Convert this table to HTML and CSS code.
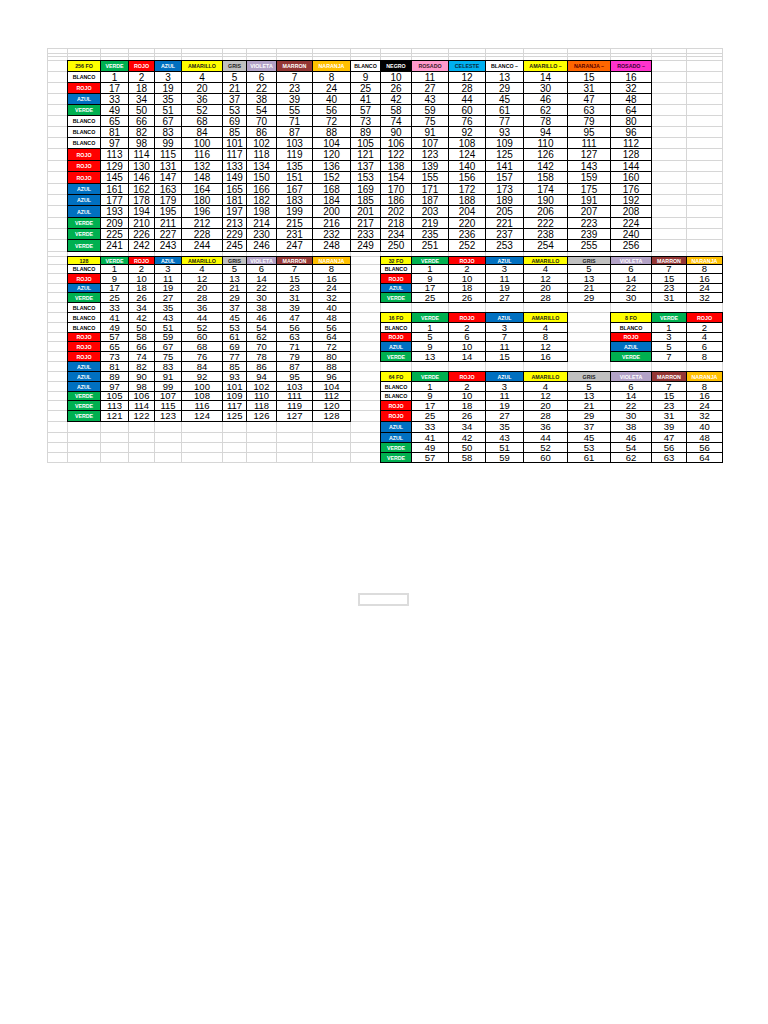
FILE: index.html
```html
<!DOCTYPE html>
<html lang="es">
<head>
<meta charset="utf-8">
<title>Código de colores FO</title>
<link rel="stylesheet" href="styles.css">
</head>
<body>
<div class="sheet">
<table class="grid">
<colgroup><col><col><col><col><col><col><col><col><col><col><col><col><col><col><col><col><col><col><col><col></colgroup>
<tbody class="top">
<tr class="h5"><td></td><td></td><td></td><td></td><td></td><td></td><td></td><td></td><td></td><td></td><td></td><td></td><td></td><td></td><td></td><td></td><td></td><td></td><td></td><td></td></tr>
<tr class="h3"><td></td><td></td><td></td><td></td><td></td><td></td><td></td><td></td><td></td><td></td><td></td><td></td><td></td><td></td><td></td><td></td><td></td><td></td><td></td><td></td></tr>
<tr class="h4"><td></td><td></td><td></td><td></td><td></td><td></td><td></td><td></td><td></td><td></td><td></td><td></td><td></td><td></td><td></td><td></td><td></td><td></td><td></td><td></td></tr>
<tr class="h11"><td></td><td class="ye">256 FO</td><td class="ve">VERDE</td><td class="ro">ROJO</td><td class="az">AZUL</td><td class="ye">AMARILLO</td><td class="gr">GRIS</td><td class="vi">VIOLETA</td><td class="ma">MARRON</td><td class="na">NARANJA</td><td class="bl">BLANCO</td><td class="ne">NEGRO</td><td class="rs">ROSADO</td><td class="ce">CELESTE</td><td class="bl">BLANCO –</td><td class="ye">AMARILLO –</td><td class="nb">NARANJA –</td><td class="rm">ROSADO –</td><td></td><td></td></tr>
<tr class="h11"><td></td><td class="bl">BLANCO</td><td class="n">1</td><td class="n">2</td><td class="n">3</td><td class="n">4</td><td class="n">5</td><td class="n">6</td><td class="n">7</td><td class="n">8</td><td class="n">9</td><td class="n">10</td><td class="n">11</td><td class="n">12</td><td class="n">13</td><td class="n">14</td><td class="n">15</td><td class="n">16</td><td></td><td></td></tr>
<tr class="h11"><td></td><td class="ro">ROJO</td><td class="n">17</td><td class="n">18</td><td class="n">19</td><td class="n">20</td><td class="n">21</td><td class="n">22</td><td class="n">23</td><td class="n">24</td><td class="n">25</td><td class="n">26</td><td class="n">27</td><td class="n">28</td><td class="n">29</td><td class="n">30</td><td class="n">31</td><td class="n">32</td><td></td><td></td></tr>
<tr class="h11"><td></td><td class="az">AZUL</td><td class="n">33</td><td class="n">34</td><td class="n">35</td><td class="n">36</td><td class="n">37</td><td class="n">38</td><td class="n">39</td><td class="n">40</td><td class="n">41</td><td class="n">42</td><td class="n">43</td><td class="n">44</td><td class="n">45</td><td class="n">46</td><td class="n">47</td><td class="n">48</td><td></td><td></td></tr>
<tr class="h11"><td></td><td class="ve">VERDE</td><td class="n">49</td><td class="n">50</td><td class="n">51</td><td class="n">52</td><td class="n">53</td><td class="n">54</td><td class="n">55</td><td class="n">56</td><td class="n">57</td><td class="n">58</td><td class="n">59</td><td class="n">60</td><td class="n">61</td><td class="n">62</td><td class="n">63</td><td class="n">64</td><td></td><td></td></tr>
<tr class="h11"><td></td><td class="bl">BLANCO</td><td class="n">65</td><td class="n">66</td><td class="n">67</td><td class="n">68</td><td class="n">69</td><td class="n">70</td><td class="n">71</td><td class="n">72</td><td class="n">73</td><td class="n">74</td><td class="n">75</td><td class="n">76</td><td class="n">77</td><td class="n">78</td><td class="n">79</td><td class="n">80</td><td></td><td></td></tr>
<tr class="h11"><td></td><td class="bl">BLANCO</td><td class="n">81</td><td class="n">82</td><td class="n">83</td><td class="n">84</td><td class="n">85</td><td class="n">86</td><td class="n">87</td><td class="n">88</td><td class="n">89</td><td class="n">90</td><td class="n">91</td><td class="n">92</td><td class="n">93</td><td class="n">94</td><td class="n">95</td><td class="n">96</td><td></td><td></td></tr>
<tr class="h11"><td></td><td class="bl">BLANCO</td><td class="n">97</td><td class="n">98</td><td class="n">99</td><td class="n">100</td><td class="n">101</td><td class="n">102</td><td class="n">103</td><td class="n">104</td><td class="n">105</td><td class="n">106</td><td class="n">107</td><td class="n">108</td><td class="n">109</td><td class="n">110</td><td class="n">111</td><td class="n">112</td><td></td><td></td></tr>
<tr class="h12"><td></td><td class="ro">ROJO</td><td class="n">113</td><td class="n">114</td><td class="n">115</td><td class="n">116</td><td class="n">117</td><td class="n">118</td><td class="n">119</td><td class="n">120</td><td class="n">121</td><td class="n">122</td><td class="n">123</td><td class="n">124</td><td class="n">125</td><td class="n">126</td><td class="n">127</td><td class="n">128</td><td></td><td></td></tr>
<tr class="h11"><td></td><td class="ro">ROJO</td><td class="n">129</td><td class="n">130</td><td class="n">131</td><td class="n">132</td><td class="n">133</td><td class="n">134</td><td class="n">135</td><td class="n">136</td><td class="n">137</td><td class="n">138</td><td class="n">139</td><td class="n">140</td><td class="n">141</td><td class="n">142</td><td class="n">143</td><td class="n">144</td><td></td><td></td></tr>
<tr class="h12"><td></td><td class="ro">ROJO</td><td class="n">145</td><td class="n">146</td><td class="n">147</td><td class="n">148</td><td class="n">149</td><td class="n">150</td><td class="n">151</td><td class="n">152</td><td class="n">153</td><td class="n">154</td><td class="n">155</td><td class="n">156</td><td class="n">157</td><td class="n">158</td><td class="n">159</td><td class="n">160</td><td></td><td></td></tr>
<tr class="h11"><td></td><td class="az">AZUL</td><td class="n">161</td><td class="n">162</td><td class="n">163</td><td class="n">164</td><td class="n">165</td><td class="n">166</td><td class="n">167</td><td class="n">168</td><td class="n">169</td><td class="n">170</td><td class="n">171</td><td class="n">172</td><td class="n">173</td><td class="n">174</td><td class="n">175</td><td class="n">176</td><td></td><td></td></tr>
<tr class="h11"><td></td><td class="az">AZUL</td><td class="n">177</td><td class="n">178</td><td class="n">179</td><td class="n">180</td><td class="n">181</td><td class="n">182</td><td class="n">183</td><td class="n">184</td><td class="n">185</td><td class="n">186</td><td class="n">187</td><td class="n">188</td><td class="n">189</td><td class="n">190</td><td class="n">191</td><td class="n">192</td><td></td><td></td></tr>
<tr class="h12"><td></td><td class="az">AZUL</td><td class="n">193</td><td class="n">194</td><td class="n">195</td><td class="n">196</td><td class="n">197</td><td class="n">198</td><td class="n">199</td><td class="n">200</td><td class="n">201</td><td class="n">202</td><td class="n">203</td><td class="n">204</td><td class="n">205</td><td class="n">206</td><td class="n">207</td><td class="n">208</td><td></td><td></td></tr>
<tr class="h11"><td></td><td class="ve">VERDE</td><td class="n">209</td><td class="n">210</td><td class="n">211</td><td class="n">212</td><td class="n">213</td><td class="n">214</td><td class="n">215</td><td class="n">216</td><td class="n">217</td><td class="n">218</td><td class="n">219</td><td class="n">220</td><td class="n">221</td><td class="n">222</td><td class="n">223</td><td class="n">224</td><td></td><td></td></tr>
<tr class="h11"><td></td><td class="ve">VERDE</td><td class="n">225</td><td class="n">226</td><td class="n">227</td><td class="n">228</td><td class="n">229</td><td class="n">230</td><td class="n">231</td><td class="n">232</td><td class="n">233</td><td class="n">234</td><td class="n">235</td><td class="n">236</td><td class="n">237</td><td class="n">238</td><td class="n">239</td><td class="n">240</td><td></td><td></td></tr>
<tr class="h12"><td></td><td class="ve">VERDE</td><td class="n">241</td><td class="n">242</td><td class="n">243</td><td class="n">244</td><td class="n">245</td><td class="n">246</td><td class="n">247</td><td class="n">248</td><td class="n">249</td><td class="n">250</td><td class="n">251</td><td class="n">252</td><td class="n">253</td><td class="n">254</td><td class="n">255</td><td class="n">256</td><td></td><td></td></tr>
<tr class="h5"><td></td><td></td><td></td><td></td><td></td><td></td><td></td><td></td><td></td><td></td><td></td><td></td><td></td><td></td><td></td><td></td><td></td><td></td><td></td><td></td></tr>
</tbody>
<tbody class="low">
<tr class="h8"><td></td><td class="ye">128</td><td class="ve">VERDE</td><td class="ro">ROJO</td><td class="az">AZUL</td><td class="ye">AMARILLO</td><td class="gr">GRIS</td><td class="vi">VIOLETA</td><td class="ma">MARRON</td><td class="na">NARANJA</td><td></td><td class="ye">32 FO</td><td class="ve">VERDE</td><td class="ro">ROJO</td><td class="az">AZUL</td><td class="ye">AMARILLO</td><td class="gr">GRIS</td><td class="vi">VIOLETA</td><td class="ma">MARRON</td><td class="na">NARANJA</td></tr>
<tr class="h9"><td></td><td class="bl">BLANCO</td><td class="n">1</td><td class="n">2</td><td class="n">3</td><td class="n">4</td><td class="n">5</td><td class="n">6</td><td class="n">7</td><td class="n">8</td><td></td><td class="bl">BLANCO</td><td class="n">1</td><td class="n">2</td><td class="n">3</td><td class="n">4</td><td class="n">5</td><td class="n">6</td><td class="n">7</td><td class="n">8</td></tr>
<tr class="h10"><td></td><td class="ro">ROJO</td><td class="n">9</td><td class="n">10</td><td class="n">11</td><td class="n">12</td><td class="n">13</td><td class="n">14</td><td class="n">15</td><td class="n">16</td><td></td><td class="ro">ROJO</td><td class="n">9</td><td class="n">10</td><td class="n">11</td><td class="n">12</td><td class="n">13</td><td class="n">14</td><td class="n">15</td><td class="n">16</td></tr>
<tr class="h9"><td></td><td class="az">AZUL</td><td class="n">17</td><td class="n">18</td><td class="n">19</td><td class="n">20</td><td class="n">21</td><td class="n">22</td><td class="n">23</td><td class="n">24</td><td></td><td class="az">AZUL</td><td class="n">17</td><td class="n">18</td><td class="n">19</td><td class="n">20</td><td class="n">21</td><td class="n">22</td><td class="n">23</td><td class="n">24</td></tr>
<tr class="h10"><td></td><td class="ve">VERDE</td><td class="n">25</td><td class="n">26</td><td class="n">27</td><td class="n">28</td><td class="n">29</td><td class="n">30</td><td class="n">31</td><td class="n">32</td><td></td><td class="ve">VERDE</td><td class="n">25</td><td class="n">26</td><td class="n">27</td><td class="n">28</td><td class="n">29</td><td class="n">30</td><td class="n">31</td><td class="n">32</td></tr>
<tr class="h10"><td></td><td class="bl">BLANCO</td><td class="n">33</td><td class="n">34</td><td class="n">35</td><td class="n">36</td><td class="n">37</td><td class="n">38</td><td class="n">39</td><td class="n">40</td><td></td><td></td><td></td><td></td><td></td><td></td><td></td><td></td><td></td><td></td></tr>
<tr class="h10"><td></td><td class="bl">BLANCO</td><td class="n">41</td><td class="n">42</td><td class="n">43</td><td class="n">44</td><td class="n">45</td><td class="n">46</td><td class="n">47</td><td class="n">48</td><td></td><td class="ye">16 FO</td><td class="ve">VERDE</td><td class="ro">ROJO</td><td class="az">AZUL</td><td class="ye">AMARILLO</td><td></td><td class="ye">8 FO</td><td class="ve">VERDE</td><td class="ro">ROJO</td></tr>
<tr class="h10"><td></td><td class="bl">BLANCO</td><td class="n">49</td><td class="n">50</td><td class="n">51</td><td class="n">52</td><td class="n">53</td><td class="n">54</td><td class="n">56</td><td class="n">56</td><td></td><td class="bl">BLANCO</td><td class="n">1</td><td class="n">2</td><td class="n">3</td><td class="n">4</td><td></td><td class="bl">BLANCO</td><td class="n">1</td><td class="n">2</td></tr>
<tr class="h9"><td></td><td class="ro">ROJO</td><td class="n">57</td><td class="n">58</td><td class="n">59</td><td class="n">60</td><td class="n">61</td><td class="n">62</td><td class="n">63</td><td class="n">64</td><td></td><td class="ro">ROJO</td><td class="n">5</td><td class="n">6</td><td class="n">7</td><td class="n">8</td><td></td><td class="ro">ROJO</td><td class="n">3</td><td class="n">4</td></tr>
<tr class="h10"><td></td><td class="ro">ROJO</td><td class="n">65</td><td class="n">66</td><td class="n">67</td><td class="n">68</td><td class="n">69</td><td class="n">70</td><td class="n">71</td><td class="n">72</td><td></td><td class="az">AZUL</td><td class="n">9</td><td class="n">10</td><td class="n">11</td><td class="n">12</td><td></td><td class="az">AZUL</td><td class="n">5</td><td class="n">6</td></tr>
<tr class="h10"><td></td><td class="ro">ROJO</td><td class="n">73</td><td class="n">74</td><td class="n">75</td><td class="n">76</td><td class="n">77</td><td class="n">78</td><td class="n">79</td><td class="n">80</td><td></td><td class="ve">VERDE</td><td class="n">13</td><td class="n">14</td><td class="n">15</td><td class="n">16</td><td></td><td class="ve">VERDE</td><td class="n">7</td><td class="n">8</td></tr>
<tr class="h10"><td></td><td class="az">AZUL</td><td class="n">81</td><td class="n">82</td><td class="n">83</td><td class="n">84</td><td class="n">85</td><td class="n">86</td><td class="n">87</td><td class="n">88</td><td></td><td></td><td></td><td></td><td></td><td></td><td></td><td></td><td></td><td></td></tr>
<tr class="h10"><td></td><td class="az">AZUL</td><td class="n">89</td><td class="n">90</td><td class="n">91</td><td class="n">92</td><td class="n">93</td><td class="n">94</td><td class="n">95</td><td class="n">96</td><td></td><td class="ye">64 FO</td><td class="ve">VERDE</td><td class="ro">ROJO</td><td class="az">AZUL</td><td class="ye">AMARILLO</td><td class="gr">GRIS</td><td class="vi">VIOLETA</td><td class="ma">MARRON</td><td class="na">NARANJA</td></tr>
<tr class="h10"><td></td><td class="az">AZUL</td><td class="n">97</td><td class="n">98</td><td class="n">99</td><td class="n">100</td><td class="n">101</td><td class="n">102</td><td class="n">103</td><td class="n">104</td><td></td><td class="bl">BLANCO</td><td class="n">1</td><td class="n">2</td><td class="n">3</td><td class="n">4</td><td class="n">5</td><td class="n">6</td><td class="n">7</td><td class="n">8</td></tr>
<tr class="h9"><td></td><td class="ve">VERDE</td><td class="n">105</td><td class="n">106</td><td class="n">107</td><td class="n">108</td><td class="n">109</td><td class="n">110</td><td class="n">111</td><td class="n">112</td><td></td><td class="bl">BLANCO</td><td class="n">9</td><td class="n">10</td><td class="n">11</td><td class="n">12</td><td class="n">13</td><td class="n">14</td><td class="n">15</td><td class="n">16</td></tr>
<tr class="h10"><td></td><td class="ve">VERDE</td><td class="n">113</td><td class="n">114</td><td class="n">115</td><td class="n">116</td><td class="n">117</td><td class="n">118</td><td class="n">119</td><td class="n">120</td><td></td><td class="ro">ROJO</td><td class="n">17</td><td class="n">18</td><td class="n">19</td><td class="n">20</td><td class="n">21</td><td class="n">22</td><td class="n">23</td><td class="n">24</td></tr>
<tr class="h11"><td></td><td class="ve">VERDE</td><td class="n">121</td><td class="n">122</td><td class="n">123</td><td class="n">124</td><td class="n">125</td><td class="n">126</td><td class="n">127</td><td class="n">128</td><td></td><td class="ro">ROJO</td><td class="n">25</td><td class="n">26</td><td class="n">27</td><td class="n">28</td><td class="n">29</td><td class="n">30</td><td class="n">31</td><td class="n">32</td></tr>
<tr class="h11"><td></td><td></td><td></td><td></td><td></td><td></td><td></td><td></td><td></td><td></td><td></td><td class="az">AZUL</td><td class="n">33</td><td class="n">34</td><td class="n">35</td><td class="n">36</td><td class="n">37</td><td class="n">38</td><td class="n">39</td><td class="n">40</td></tr>
<tr class="h10"><td></td><td></td><td></td><td></td><td></td><td></td><td></td><td></td><td></td><td></td><td></td><td class="az">AZUL</td><td class="n">41</td><td class="n">42</td><td class="n">43</td><td class="n">44</td><td class="n">45</td><td class="n">46</td><td class="n">47</td><td class="n">48</td></tr>
<tr class="h10"><td></td><td></td><td></td><td></td><td></td><td></td><td></td><td></td><td></td><td></td><td></td><td class="ve">VERDE</td><td class="n">49</td><td class="n">50</td><td class="n">51</td><td class="n">52</td><td class="n">53</td><td class="n">54</td><td class="n">56</td><td class="n">56</td></tr>
<tr class="h10"><td></td><td></td><td></td><td></td><td></td><td></td><td></td><td></td><td></td><td></td><td></td><td class="ve">VERDE</td><td class="n">57</td><td class="n">58</td><td class="n">59</td><td class="n">60</td><td class="n">61</td><td class="n">62</td><td class="n">63</td><td class="n">64</td></tr>
</tbody>
</table>
</div>
<div class="note"></div>
</body>
</html>
```

FILE: styles.css
```css
html, body {
  margin: 0;
  padding: 0;
  background: #ffffff;
  font-family: "Liberation Sans", Arial, sans-serif;
}

.sheet {
  padding: 48px 0 0 47px;
}

.grid {
  border-collapse: collapse;
  table-layout: fixed;
  width: 675px;
}

.grid col:nth-child(1) { width: 20px; }
.grid col:nth-child(2) { width: 33px; }
.grid col:nth-child(3) { width: 28px; }
.grid col:nth-child(4) { width: 26px; }
.grid col:nth-child(5) { width: 27px; }
.grid col:nth-child(6) { width: 41px; }
.grid col:nth-child(7) { width: 24px; }
.grid col:nth-child(8) { width: 30px; }
.grid col:nth-child(9) { width: 36px; }
.grid col:nth-child(10) { width: 38px; }
.grid col:nth-child(11) { width: 30px; }
.grid col:nth-child(12) { width: 31px; }
.grid col:nth-child(13) { width: 37px; }
.grid col:nth-child(14) { width: 37px; }
.grid col:nth-child(15) { width: 38px; }
.grid col:nth-child(16) { width: 44px; }
.grid col:nth-child(17) { width: 43px; }
.grid col:nth-child(18) { width: 41px; }
.grid col:nth-child(19) { width: 35px; }
.grid col:nth-child(20) { width: 36px; }

.grid td {
  border: 1px solid #d6d6d6;
  padding: 0;
  text-align: center;
  vertical-align: middle;
  white-space: nowrap;
  overflow: hidden;
  color: #000;
  font-size: 10px;
  line-height: 9px;
}

.h3 { height: 3px; }
.h4 { height: 4px; }
.h5 { height: 5px; }
.h8 { height: 8px; }
.h9 { height: 9px; }
.h10 { height: 10px; }
.h11 { height: 11px; }
.h12 { height: 12px; }

/* bordered numbers */
.grid td.n {
  border: 1px double #000;
  font-size: 10px;
  line-height: 9px;
}

.low td.n {
  font-size: 9.5px;
  line-height: 8px;
}

/* colour chips (headers and row labels) */
.grid td.ye, .grid td.ve, .grid td.ro, .grid td.az, .grid td.gr,
.grid td.vi, .grid td.ma, .grid td.na, .grid td.bl, .grid td.ne,
.grid td.rs, .grid td.ce, .grid td.nb, .grid td.rm {
  border: 1px double #000;
  font-size: 5.3px;
  font-weight: bold;
  line-height: 6px;
}

.grid td.ye { background: #ffff00; color: #1a1a1a; }
.grid td.ve { background: #00b050; color: #ffffff; }
.grid td.ro { background: #ff0000; color: #ffffff; }
.grid td.az { background: #0070c0; color: #ffffff; }
.grid td.gr { background: #c0c0c0; color: #222222; }
.grid td.vi { background: #b3a2c7; color: #ffffff; }
.grid td.ma { background: #953735; color: #ffffff; }
.grid td.na { background: #ffc000; color: #ffffff; }
.grid td.bl { background: #ffffff; color: #000000; }
.grid td.ne { background: #000000; color: #ffffff; }
.grid td.rs { background: #ff99cc; color: #3a1a2a; }
.grid td.ce { background: #00b0f0; color: #0a2a40; }
.grid td.nb { background: #ff6600; color: #5a0000; }
.grid td.rm { background: #ff33cc; color: #3a0030; }

.note {
  width: 47px;
  height: 9px;
  border: 2px solid #dcdcdc;
  margin: 130px 0 0 358px;
}
```
